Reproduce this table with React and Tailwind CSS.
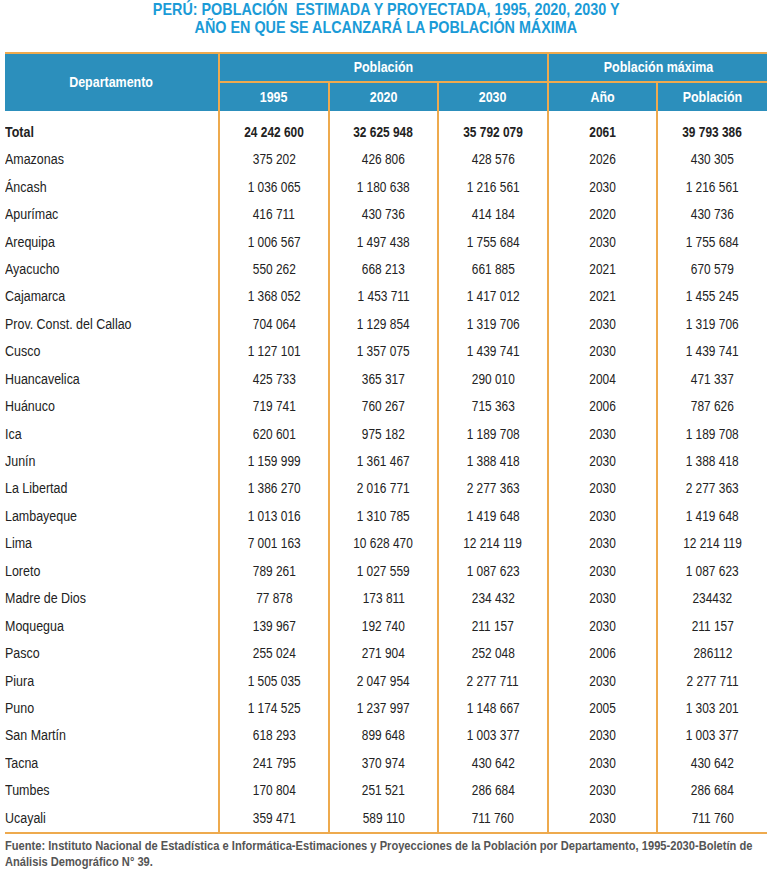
import React from 'react';

const rows = [
  ['Amazonas', '375 202', '426 806', '428 576', '2026', '430 305'],
  ['Áncash', '1 036 065', '1 180 638', '1 216 561', '2030', '1 216 561'],
  ['Apurímac', '416 711', '430 736', '414 184', '2020', '430 736'],
  ['Arequipa', '1 006 567', '1 497 438', '1 755 684', '2030', '1 755 684'],
  ['Ayacucho', '550 262', '668 213', '661 885', '2021', '670 579'],
  ['Cajamarca', '1 368 052', '1 453 711', '1 417 012', '2021', '1 455 245'],
  ['Prov. Const. del Callao', '704 064', '1 129 854', '1 319 706', '2030', '1 319 706'],
  ['Cusco', '1 127 101', '1 357 075', '1 439 741', '2030', '1 439 741'],
  ['Huancavelica', '425 733', '365 317', '290 010', '2004', '471 337'],
  ['Huánuco', '719 741', '760 267', '715 363', '2006', '787 626'],
  ['Ica', '620 601', '975 182', '1 189 708', '2030', '1 189 708'],
  ['Junín', '1 159 999', '1 361 467', '1 388 418', '2030', '1 388 418'],
  ['La Libertad', '1 386 270', '2 016 771', '2 277 363', '2030', '2 277 363'],
  ['Lambayeque', '1 013 016', '1 310 785', '1 419 648', '2030', '1 419 648'],
  ['Lima', '7 001 163', '10 628 470', '12 214 119', '2030', '12 214 119'],
  ['Loreto', '789 261', '1 027 559', '1 087 623', '2030', '1 087 623'],
  ['Madre de Dios', '77 878', '173 811', '234 432', '2030', '234432'],
  ['Moquegua', '139 967', '192 740', '211 157', '2030', '211 157'],
  ['Pasco', '255 024', '271 904', '252 048', '2006', '286112'],
  ['Piura', '1 505 035', '2 047 954', '2 277 711', '2030', '2 277 711'],
  ['Puno', '1 174 525', '1 237 997', '1 148 667', '2005', '1 303 201'],
  ['San Martín', '618 293', '899 648', '1 003 377', '2030', '1 003 377'],
  ['Tacna', '241 795', '370 974', '430 642', '2030', '430 642'],
  ['Tumbes', '170 804', '251 521', '286 684', '2030', '286 684'],
  ['Ucayali', '359 471', '589 110', '711 760', '2030', '711 760'],
];

const total = ['Total', '24 242 600', '32 625 948', '35 792 079', '2061', '39 793 386'];

// the source uses a condensed face; squeeze Liberation Sans to match
function Narrow({ children, left }) {
  return (
    <span className={`inline-block whitespace-nowrap ${left ? 'origin-left scale-x-[0.89]' : 'scale-x-[0.85]'}`}>
      {children}
    </span>
  );
}

function Row({ cells, bold, first }) {
  const pad = first ? 'pt-[7px]' : '';
  return (
    <tr className={first ? 'h-[35px]' : 'h-[27.44px]'}>
      <td className={`p-0 text-left ${bold ? 'font-bold' : ''} ${pad}`}>
        <Narrow left>{cells[0]}</Narrow>
      </td>
      {cells.slice(1).map((c, i) => (
        <td key={i} className={`p-0 text-center border-l-2 border-[#eeaa4e] ${bold ? 'font-bold' : ''} ${pad}`}>
          <Narrow>{c}</Narrow>
        </td>
      ))}
    </tr>
  );
}

export default function App() {
  return (
    <div
      className="w-[772px] h-[869px] overflow-hidden bg-white px-[5px] text-[#222]"
      style={{ fontFamily: '"Liberation Sans", Arial, sans-serif' }}
    >
      <h1 className="pt-[1px] text-center text-[16.5px] leading-[17.5px] font-bold text-[#1b9bd7]">
        <span className="inline-block whitespace-nowrap scale-x-[0.87]">
          PERÚ: POBLACIÓN&nbsp; ESTIMADA Y PROYECTADA, 1995, 2020, 2030 Y
        </span>
        <br />
        <span className="inline-block whitespace-nowrap scale-x-[0.87]">
          AÑO EN QUE SE ALCANZARÁ LA POBLACIÓN MÁXIMA
        </span>
      </h1>

      <table className="mt-[16px] w-[762px] border-collapse table-fixed text-[14px]">
        <colgroup>
          <col className="w-[214px]" />
          <col className="w-[110px]" />
          <col className="w-[109px]" />
          <col className="w-[110px]" />
          <col className="w-[109px]" />
          <col className="w-[110px]" />
        </colgroup>
        <thead className="bg-[#2c8fbc] text-white">
          <tr className="h-[29px] border-t-2 border-[#eeaa4e]">
            <th rowSpan={2} className="p-0 font-bold">
              <span className="inline-block scale-x-[0.89]">Departamento</span>
            </th>
            <th colSpan={3} className="p-0 font-bold border-l-2 border-b-2 border-[#eeaa4e]">
              <span className="inline-block scale-x-[0.89]">Población</span>
            </th>
            <th colSpan={2} className="p-0 font-bold border-l-2 border-b-2 border-[#eeaa4e]">
              <span className="inline-block scale-x-[0.89]">Población máxima</span>
            </th>
          </tr>
          <tr className="h-[29px]">
            {['1995', '2020', '2030', 'Año', 'Población'].map((h) => (
              <th key={h} className="p-0 font-bold border-l-2 border-[#eeaa4e]">
                <span className="inline-block scale-x-[0.89]">{h}</span>
              </th>
            ))}
          </tr>
        </thead>
        <tbody>
          <Row cells={total} bold first />
          {rows.map((r) => (
            <Row key={r[0]} cells={r} />
          ))}
          <tr className="h-[1px]">
            <td colSpan={6} className="border-b-2 border-[#eeaa4e] p-0"></td>
          </tr>
        </tbody>
      </table>

      <p className="mt-[4px] w-[856px] origin-left scale-x-[0.89] text-[12.5px] leading-[16px] font-bold text-[#555]">
        Fuente: Instituto Nacional de Estadística e Informática-Estimaciones y Proyecciones de la Población por Departamento, 1995-2030-Boletín de Análisis Demográfico N° 39.
      </p>
    </div>
  );
}
